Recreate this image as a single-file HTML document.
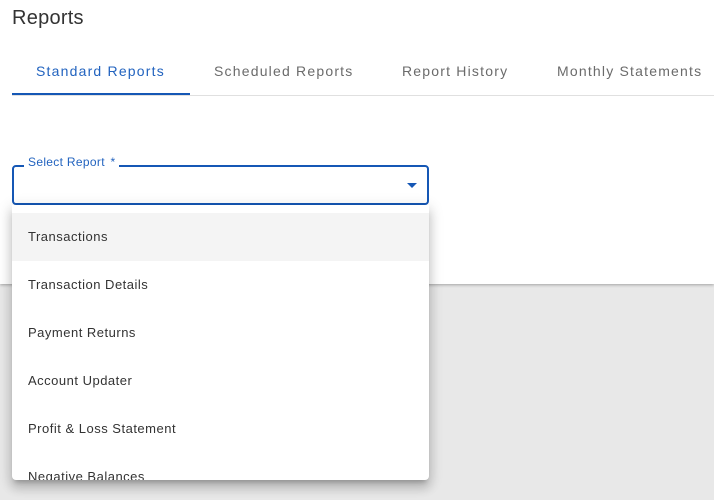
<!DOCTYPE html>
<html>
<head>
<meta charset="utf-8">
<style>
html,body{margin:0;padding:0;width:714px;height:500px;overflow:hidden;background:#e8e8e8;}
body{position:relative;font-family:"Liberation Sans",Arial,sans-serif;}
.panel{position:absolute;left:0;top:0;width:714px;height:284px;background:#fff;box-shadow:0 1px 3px rgba(0,0,0,.3);}
.title{position:absolute;left:12px;top:6px;font-size:20px;line-height:24px;color:#333;letter-spacing:.25px;}
.tab{position:absolute;top:63px;font-size:14px;line-height:16px;letter-spacing:1.2px;color:#6b6b6b;white-space:nowrap;}
.tab.active{color:#2263bf;}
.rule{position:absolute;left:12px;top:95px;width:702px;height:1px;background:#e0e0e0;}
.ind{position:absolute;left:12px;top:93px;width:178px;height:2px;background:#1557b5;}
.box{position:absolute;left:12px;top:165px;width:413px;height:36px;border:2px solid #1557b5;border-radius:4px;background:#fff;}
.gap{position:absolute;left:24px;top:160px;width:95px;height:10px;background:#fff;}
.lbl{position:absolute;left:28px;top:155px;font-size:12px;line-height:14px;color:#2263bf;letter-spacing:.32px;white-space:nowrap;}
.lbl i{font-style:normal;margin-left:2px;}
.menu{position:absolute;left:12px;top:205px;width:417px;height:275px;background:#fff;border-radius:0 0 4px 4px;overflow:hidden;box-shadow:0 5px 5px -3px rgba(0,0,0,.2),0 8px 10px 1px rgba(0,0,0,.14),0 3px 14px 2px rgba(0,0,0,.12);}
.item{position:absolute;left:0;width:417px;height:48px;}
.item.sel{background:#f4f4f4;}
.item span{position:absolute;left:16px;top:16px;font-size:13px;line-height:16px;color:#333;letter-spacing:.5px;white-space:nowrap;}
svg{position:absolute;left:405px;top:182px;}
</style>
</head>
<body>
<div class="panel"></div>
<div class="title">Reports</div>
<div class="tab active" style="left:36px">Standard Reports</div>
<div class="tab" style="left:214px">Scheduled Reports</div>
<div class="tab" style="left:402px">Report History</div>
<div class="tab" style="left:557px">Monthly Statements</div>
<div class="rule"></div>
<div class="ind"></div>
<div class="box"></div>
<div class="gap"></div>
<div class="lbl">Select Report <i>*</i></div>
<svg width="14" height="8" viewBox="0 0 14 8"><path d="M2 1h10L7 6z" fill="#1557b5"/></svg>
<div class="menu">
<div class="item sel" style="top:8px"><span>Transactions</span></div>
<div class="item" style="top:56px"><span>Transaction Details</span></div>
<div class="item" style="top:104px"><span>Payment Returns</span></div>
<div class="item" style="top:152px"><span>Account Updater</span></div>
<div class="item" style="top:200px"><span>Profit &amp; Loss Statement</span></div>
<div class="item" style="top:248px"><span>Negative Balances</span></div>
</div>
</body>
</html>
